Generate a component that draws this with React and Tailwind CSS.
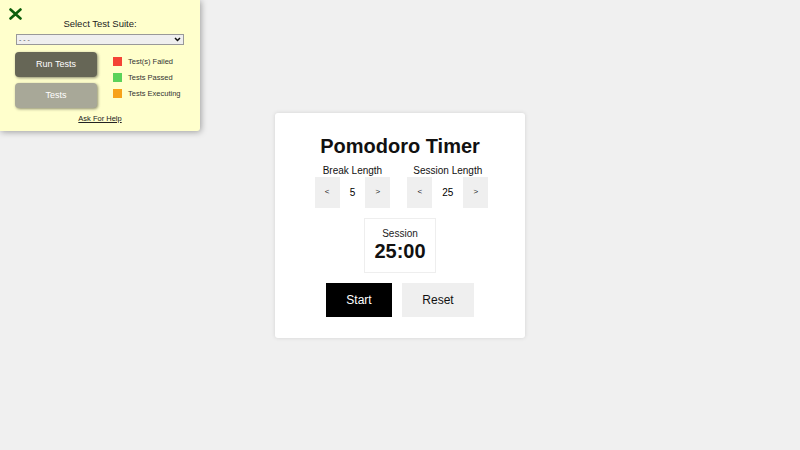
import React, { useState } from "react";

const sans = { fontFamily: '"Liberation Sans", Arial, sans-serif' };

const TestPanel = () => (
  <div className="absolute left-0 top-0 w-[200px] h-[131px] bg-[#ffffcc] shadow-[1px_1px_6px_rgba(0,0,0,0.35)] rounded-br-[3px] text-[#222]">
    <svg className="absolute left-[9px] top-[8px]" width="13" height="12" viewBox="0 0 13 12">
      <path d="M1.5 1.5 L11.5 10.5 M11.5 1.5 L1.5 10.5" stroke="#0b5e0b" strokeWidth="2.6" strokeLinecap="round" />
    </svg>
    <div className="pt-[18px] text-center text-[9.5px] leading-[12px]">Select Test Suite:</div>
    <div className="mx-[16px] mt-[4px] h-[11px] border border-[#999] bg-[#efefef] flex items-center justify-between px-[2px]">
      <span className="text-[7px] leading-[7px] text-[#555]">- - -</span>
      <svg width="7" height="5" viewBox="0 0 7 5">
        <path d="M1 1 L3.5 3.5 L6 1" stroke="#111" strokeWidth="1.5" fill="none" />
      </svg>
    </div>
    <div className="flex mt-[7px] pl-[15px]">
      <div className="flex flex-col gap-[6px]">
        <div className="w-[82px] h-[25px] rounded-[4px] bg-[#666656] text-white text-[9px] flex items-center justify-center shadow-[1px_1px_3px_rgba(0,0,0,0.45)]">
          Run Tests
        </div>
        <div className="w-[82px] h-[25px] rounded-[4px] bg-[#a8a898] text-white text-[9px] flex items-center justify-center shadow-[1px_1px_3px_rgba(0,0,0,0.45)]">
          Tests
        </div>
      </div>
      <div className="flex flex-col gap-[7px] ml-[16px] mt-[5px] text-[7.5px] leading-[9px] text-[#333]">
        <div className="flex items-center gap-[6px]">
          <span className="w-[9px] h-[9px] bg-[#f44336]" />
          Test(s) Failed
        </div>
        <div className="flex items-center gap-[6px]">
          <span className="w-[9px] h-[9px] bg-[#5ad25a]" />
          Tests Passed
        </div>
        <div className="flex items-center gap-[6px]">
          <span className="w-[9px] h-[9px] bg-[#f7a21b]" />
          Tests Executing
        </div>
      </div>
    </div>
    <div className="text-center mt-[6px] text-[7.5px] leading-[10px] underline text-[#222]">Ask For Help</div>
  </div>
);

const Stepper = ({ label, value, onDec, onInc }) => (
  <div className="flex flex-col items-center">
    <div className="text-[10px] leading-[12px] text-[#111]">{label}</div>
    <div className="flex items-center">
      <button onClick={onDec} className="w-[25px] h-[31px] bg-[#efefef] text-[8px] text-[#222]">&lt;</button>
      <div className="px-[10px] text-center text-[10px]">{value}</div>
      <button onClick={onInc} className="w-[25px] h-[31px] bg-[#efefef] text-[8px] text-[#222]">&gt;</button>
    </div>
  </div>
);

export default function App() {
  const [brk, setBrk] = useState(5);
  const [session, setSession] = useState(25);

  return (
    <div className="relative w-full h-[450px] bg-[#f0f0f0] flex items-center justify-center" style={sans}>
      <TestPanel />
      <div className="w-[250px] h-[225px] bg-white rounded-[3px] shadow-[0_0_4px_rgba(0,0,0,0.12)] flex flex-col items-center pt-[20px]">
        <h1 className="text-[20px] leading-[26px] font-bold text-[#111]">Pomodoro Timer</h1>
        <div className="flex gap-[17px] mt-[6px] pl-[3px]">
          <Stepper label="Break Length" value={brk} onDec={() => setBrk(Math.max(1, brk - 1))} onInc={() => setBrk(brk + 1)} />
          <Stepper label="Session Length" value={session} onDec={() => setSession(Math.max(1, session - 1))} onInc={() => setSession(session + 1)} />
        </div>
        <div className="mt-[10px] w-[72px] h-[55px] border border-[#eeeeee] flex flex-col items-center pt-[9px]">
          <div className="text-[10px] leading-[12px] text-[#222]">Session</div>
          <div className="text-[20px] leading-[23px] font-bold text-[#111]">{String(session).padStart(2, "0")}:00</div>
        </div>
        <div className="flex gap-[10px] mt-[10px]">
          <button className="w-[66px] h-[34px] bg-black text-white text-[12px]">Start</button>
          <button className="w-[72px] h-[34px] bg-[#efefef] text-[#111] text-[12px]">Reset</button>
        </div>
      </div>
    </div>
  );
}
